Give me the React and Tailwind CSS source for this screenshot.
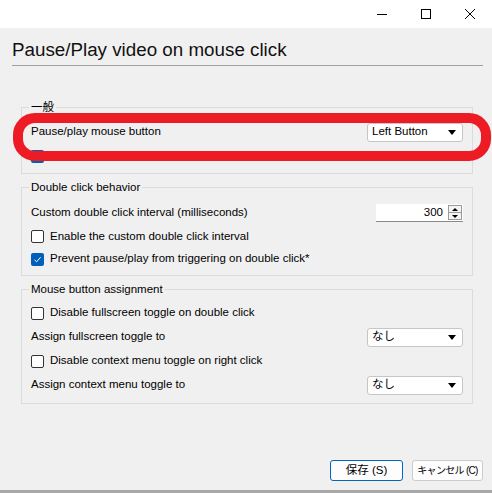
import React from "react";

const font = { fontFamily: '"Liberation Sans", "Noto Sans CJK JP", sans-serif' };

function Check({ checked, label }) {
  return (
    <div className="flex items-center gap-[6px]">
      {checked ? (
        <span className="w-[13px] h-[13px] rounded-[2px] bg-[#005fb8] flex items-center justify-center">
          <svg width="9" height="9" viewBox="0 0 9 9">
            <path d="M1.5 4.8 L3.6 6.8 L7.6 2.2" fill="none" stroke="#fff" strokeWidth="1" />
          </svg>
        </span>
      ) : (
        <span className="w-[13px] h-[13px] rounded-[2px] border border-[#333] bg-white" />
      )}
      <span>{label}</span>
    </div>
  );
}

function Combo({ value }) {
  return (
    <div className="w-[96px] h-[19px] bg-white border border-[#c6c6c6] rounded-[3px] flex items-center justify-between pl-[4px] pr-[6px]">
      <span>{value}</span>
      <svg width="8" height="5" viewBox="0 0 8 5">
        <path d="M0 0 H8 L4 5 Z" fill="#000" />
      </svg>
    </div>
  );
}

function Spin({ value }) {
  return (
    <div className="w-[87px] h-[18px] bg-white border-b border-[#8a8a8a] flex items-center justify-end">
      <span className="pr-[5px]">{value}</span>
      <div className="w-[14px] h-[15px] mr-[1px] border border-[#9a9a9a] bg-[#f4f4f4] flex flex-col">
        <div className="flex-1 flex items-center justify-center border-b border-[#9a9a9a]">
          <svg width="6" height="3" viewBox="0 0 6 3">
            <path d="M0 3 H6 L3 0 Z" fill="#000" />
          </svg>
        </div>
        <div className="flex-1 flex items-center justify-center">
          <svg width="6" height="3" viewBox="0 0 6 3">
            <path d="M0 0 H6 L3 3 Z" fill="#000" />
          </svg>
        </div>
      </div>
    </div>
  );
}

function Group({ title, className, children }) {
  return (
    <fieldset className={"ml-[21px] w-[452px] border border-[#dcdcdc] px-[9px] " + className}>
      <legend className="ml-[-2px] px-[2px] leading-[14px]">{title}</legend>
      {children}
    </fieldset>
  );
}

export default function App() {
  return (
    <div className="relative w-[492px] h-[493px] flex flex-col text-[11.5px] text-black bg-[#f0f0f0]" style={font}>
      {/* title bar */}
      <div className="h-[28px] bg-white flex justify-end shrink-0">
        <div className="w-[44px] flex items-center justify-center">
          <svg width="10" height="10" viewBox="0 0 10 10">
            <path d="M0 5.5 H10" stroke="#000" strokeWidth="1" />
          </svg>
        </div>
        <div className="w-[44px] flex items-center justify-center">
          <svg width="10" height="10" viewBox="0 0 10 10">
            <rect x="0.5" y="0.5" width="9" height="9" fill="none" stroke="#000" strokeWidth="1" />
          </svg>
        </div>
        <div className="w-[44px] flex items-center justify-center">
          <svg width="10" height="10" viewBox="0 0 10 10">
            <path d="M0 0 L10 10 M10 0 L0 10" stroke="#000" strokeWidth="1" />
          </svg>
        </div>
      </div>

      <div className="flex-1 flex flex-col border-b-[3px] border-[#a8a8a8]">
        <div className="pt-[11px] pl-[12px] text-[18.8px] leading-[22px] text-[#111]">
          Pause/Play video on mouse click
        </div>
        <div className="mt-[4px] ml-[12px] w-[471px] h-px bg-[#a0a0a0]" />

        <Group title="一般" className="mt-[34px] pt-[6px] pb-[5px]">
          <div className="h-[24px] flex items-center justify-between">
            <span>Pause/play mouse button</span>
            <Combo value="Left Button" />
          </div>
          <div className="h-[24px] flex items-center">
            <Check checked label="Show pause/play indicator" />
          </div>
        </Group>

        <Group title="Double click behavior" className="mt-[6px] pt-[7px] pb-[5px]">
          <div className="h-[24px] flex items-center justify-between">
            <span>Custom double click interval (milliseconds)</span>
            <Spin value="300" />
          </div>
          <div className="h-[23px] flex items-center">
            <Check label="Enable the custom double click interval" />
          </div>
          <div className="h-[22px] flex items-center">
            <Check checked label="Prevent pause/play from triggering on double click*" />
          </div>
        </Group>

        <Group title="Mouse button assignment" className="mt-[6px] pt-[5px] pb-[6px]">
          <div className="h-[24px] flex items-center">
            <Check label="Disable fullscreen toggle on double click" />
          </div>
          <div className="h-[24px] flex items-center justify-between">
            <span>Assign fullscreen toggle to</span>
            <Combo value="なし" />
          </div>
          <div className="h-[24px] flex items-center">
            <Check label="Disable context menu toggle on right click" />
          </div>
          <div className="h-[24px] flex items-center justify-between">
            <span>Assign context menu toggle to</span>
            <Combo value="なし" />
          </div>
        </Group>

        <div className="mt-auto pb-[9px] pr-[9px] flex justify-end gap-[9px]">
          <button className="w-[73px] h-[21px] bg-[#fdfdfd] border border-[#0067c0] rounded-[3px] flex items-center justify-center">
            保存 (S)
          </button>
          <button className="w-[71px] h-[21px] bg-[#fdfdfd] border border-[#cccccc] rounded-[3px] flex items-center justify-center text-[10px] tracking-[-0.7px] whitespace-nowrap">
            キャンセル (C)
          </button>
        </div>
      </div>

      {/* highlight ring drawn over the first group */}
      <div className="absolute left-[13px] top-[113px] w-[478px] h-[48px] border-[10px] border-[#ed1c24] rounded-[22px] pointer-events-none" />
    </div>
  );
}
